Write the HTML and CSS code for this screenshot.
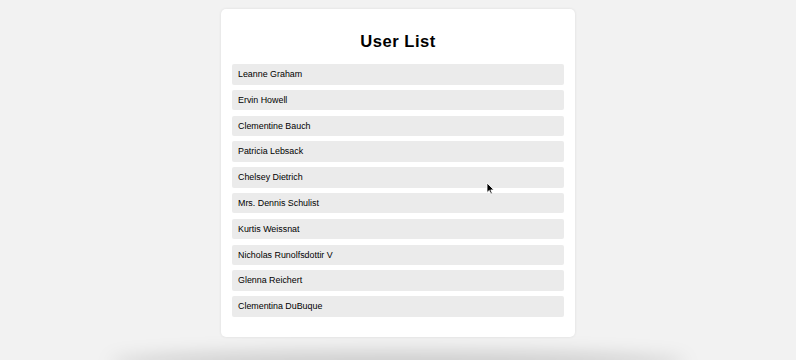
FILE: index.html
```html
<!DOCTYPE html>
<html lang="en">
<head>
<meta charset="utf-8">
<title>User List</title>
<link rel="stylesheet" href="styles.css">
</head>
<body>
<main class="card">
  <h1 class="title">User List</h1>
  <ul class="users">
    <li class="user">Leanne Graham</li>
    <li class="user">Ervin Howell</li>
    <li class="user">Clementine Bauch</li>
    <li class="user">Patricia Lebsack</li>
    <li class="user">Chelsey Dietrich</li>
    <li class="user">Mrs. Dennis Schulist</li>
    <li class="user">Kurtis Weissnat</li>
    <li class="user">Nicholas Runolfsdottir V</li>
    <li class="user">Glenna Reichert</li>
    <li class="user">Clementina DuBuque</li>
  </ul>
</main>
<svg class="cursor" width="9" height="13" viewBox="0 0 9 13" aria-hidden="true">
  <path d="M1 1 L1 10.5 L3.3 8.4 L4.9 12 L6.3 11.4 L4.8 7.9 L7.9 7.9 Z" fill="#000" stroke="#fff" stroke-width="0.8" stroke-linejoin="round"/>
</svg>
<div class="shade"></div>
</body>
</html>
```

FILE: styles.css
```css
html, body {
  margin: 0;
  padding: 0;
  height: 100%;
}
body {
  background: #f2f2f2;
  font-family: "Liberation Sans", Arial, sans-serif;
  color: #000;
  overflow: hidden;
  position: relative;
}
.card {
  width: 332px;
  margin: 9px auto 0;
  padding: 11px 11px 20px;
  background: #fff;
  border-radius: 5px;
  box-shadow: 0 0 3px rgba(0,0,0,0.09);
  position: relative;
  z-index: 1;
}
.title {
  margin: 12px 0 12px;
  font-size: 16.6px;
  line-height: 20px;
  letter-spacing: 0.5px;
  font-weight: bold;
  text-align: center;
  color: #000;
}
.users {
  list-style: none;
  margin: 0;
  padding: 0;
  display: flex;
  flex-direction: column;
  gap: 5.3px;
}
.user {
  background: #ebebeb;
  height: 20.5px;
  line-height: 21px;
  padding: 0 6px;
  font-size: 8.9px;
  border-radius: 2px;
  color: #000;
}
.cursor {
  position: absolute;
  left: 486px;
  top: 182px;
  z-index: 2;
}
.shade {
  position: absolute;
  left: 110px;
  right: 110px;
  bottom: -14px;
  height: 22px;
  background: rgba(0,0,0,0.16);
  filter: blur(9px);
  border-radius: 50%;
  z-index: 0;
}
```
